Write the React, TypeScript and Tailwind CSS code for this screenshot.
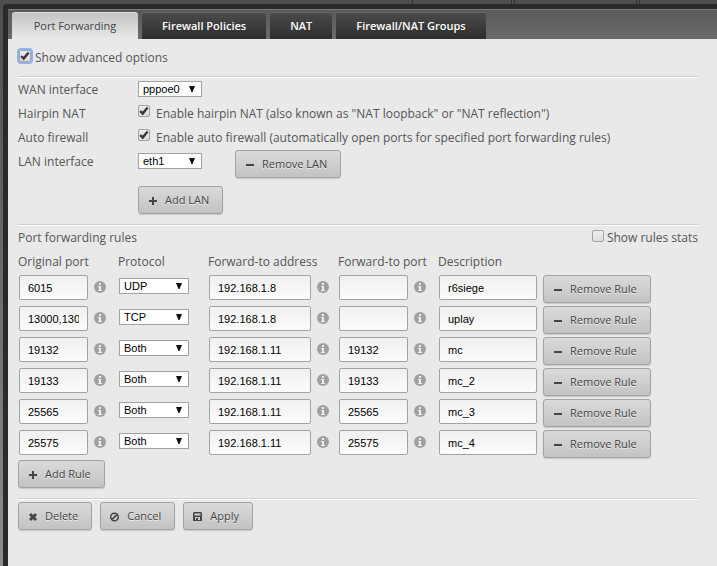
import { ButtonHTMLAttributes, FC, InputHTMLAttributes, ReactNode, useState } from 'react';
import clsx from 'clsx';

const tabs = ['Port Forwarding', 'Firewall Policies', 'NAT', 'Firewall/NAT Groups'];

const rules = [
  { port: '6015', protocol: 'UDP', address: '192.168.1.8', forwardPort: '', description: 'r6siege' },
  { port: '13000,13005', protocol: 'TCP', address: '192.168.1.8', forwardPort: '', description: 'uplay' },
  { port: '19132', protocol: 'Both', address: '192.168.1.11', forwardPort: '19132', description: 'mc' },
  { port: '19133', protocol: 'Both', address: '192.168.1.11', forwardPort: '19133', description: 'mc_2' },
  { port: '25565', protocol: 'Both', address: '192.168.1.11', forwardPort: '25565', description: 'mc_3' },
  { port: '25575', protocol: 'Both', address: '192.168.1.11', forwardPort: '25575', description: 'mc_4' },
];

const iconPaths = {
  minus: <path d="M2 4h8v2H2z" />,
  plus: <path d="M5 1h2v3h3v2H7v3H5V6H2V4h3z" />,
  cross: <path d="M2 3l2-2 2 2 2-2 2 2-2 2 2 2-2 2-2-2-2 2-2-2 2-2z" />,
  ban: <path d="M5.5 1.2a3.8 3.8 0 1 0 0 7.6 3.8 3.8 0 0 0 0-7.6zM2.9 7.6l5.2-5.2" fill="none" stroke="currentColor" strokeWidth="1.5" />,
  save: <path fillRule="evenodd" d="M2 0h7l1 1v8H1V1zM2.5 1.5v2h6v-2zM3 5v3h1V6h2v2h2V5z" />,
};

interface ActionButtonProps extends ButtonHTMLAttributes<HTMLButtonElement> {
  icon: keyof typeof iconPaths;
  children: ReactNode;
}

const ActionButton: FC<ActionButtonProps> = ({ icon, children, ...rest }) => {
  return (
    <button
      type="button"
      className="flex h-7 items-center gap-2 rounded-[3px] border border-[#a3a3a3] bg-linear-to-b from-[#dadada] to-[#c3c3c3] pr-[13px] pl-2 text-[11px] font-medium whitespace-nowrap text-[#444] shadow-[0_1px_1px_rgba(0,0,0,0.15)] text-shadow-[0_1px_0_#eee]"
      {...rest}
    >
      <svg viewBox="0 0 10 10" className="mt-px size-[10px] shrink-0" fill="currentColor" aria-hidden="true">
        {iconPaths[icon]}
      </svg>
      {children}
    </button>
  );
};

interface SelectProps {
  id?: string;
  label?: string;
  value: string;
  options: string[];
  className: string;
}

const Select: FC<SelectProps> = ({ id, label, value, options, className }) => {
  return (
    <div className={clsx('relative h-4', className)}>
      <select
        id={id}
        aria-label={label}
        defaultValue={value}
        className="block h-4 w-full appearance-none border border-[#a3a3a3] bg-white pl-1 font-['Liberation_Sans',Arial,sans-serif] text-[11px] leading-[14px] text-black"
      >
        {options.map((option) => (
          <option key={option}>{option}</option>
        ))}
      </select>
      <svg viewBox="0 0 6 6" className="pointer-events-none absolute top-[5px] right-[7px] size-[6px]" aria-hidden="true">
        <path d="M0 0h6L3.5 6h-1z" fill="#111" />
      </svg>
    </div>
  );
};

const Checkbox: FC<InputHTMLAttributes<HTMLInputElement>> = ({ className, ...rest }) => {
  return (
    <span className="relative block size-3 shrink-0">
      <input
        type="checkbox"
        className={clsx(
          'peer block size-3 appearance-none rounded-[2px] border border-[#a3a3a3] bg-linear-to-b from-[#eee] to-[#dcdcdc]',
          className,
        )}
        {...rest}
      />
      <svg viewBox="0 0 12 12" className="pointer-events-none absolute inset-0 hidden size-3 peer-checked:block" aria-hidden="true">
        <path d="M2.2 6l2.5 2.6L9.6 2.4" fill="none" stroke="#3a3a3a" strokeWidth="2.4" />
      </svg>
    </span>
  );
};

const TextInput: FC<InputHTMLAttributes<HTMLInputElement>> = ({ className, ...rest }) => {
  return (
    <input
      type="text"
      className={clsx(
        "block h-[25px] rounded-[2px] border border-[#a3a3a3] bg-linear-to-b from-[#f0f0f0] to-[#fcfcfc] px-2 pt-px font-['Liberation_Sans',Arial,sans-serif] text-[11px] text-black",
        className,
      )}
      {...rest}
    />
  );
};

const InfoIcon = () => {
  return (
    <svg viewBox="0 0 12 12" className="mt-1.5 size-3 shrink-0" aria-hidden="true">
      <circle cx="6" cy="6" r="6" fill="#a0a0a0" />
      <path d="M5 2h2v2H5zM4 5h3v4h1v1H4V9h1V6H4z" fill="#eee" />
    </svg>
  );
};

const Divider = () => <hr className="h-[2px] border-t border-b border-t-[#cfcfcf] border-b-white" />;

const App = () => {
  const [active, setActive] = useState(tabs[0]);

  return (
    <div className="flex min-h-screen flex-col bg-[#4e4e4e] font-['Open_Sans',sans-serif] text-xs text-[#555]">
      <div className="flex h-1 justify-end">
        <div className="w-[99px] border-r border-[#333]" />
        <div className="w-[99px] border-r border-[#333]" />
        <div className="w-[3px] border-r border-[#333]" />
        <div className="w-[122px] border-r border-[#333]" />
        <div className="w-[3px] border-r border-[#333]" />
        <div className="w-[77px]" />
      </div>
      <div className="flex grow bg-linear-to-b from-[#4e4e4e] to-[#8c8c8c] pl-[3px]">
        <div className="flex grow flex-col rounded-tl-[3px] bg-[#2a2a2a] pt-[5px] pl-[5px]">
          <div role="tablist" className="flex h-[30px] items-end gap-1 border-t border-[#7a7a7a] bg-linear-to-b from-[#5a5a5a] to-[#6b6b6b] pl-1">
            {tabs.map((tab) => (
              <button
                key={tab}
                type="button"
                role="tab"
                aria-selected={tab === active}
                onClick={() => setActive(tab)}
                className={clsx(
                  'h-[27px] rounded-t-[3px] border-t text-[11px] whitespace-nowrap',
                  tab === active
                    ? 'min-w-[126px] border-[#ddd] bg-linear-to-b from-[#c4c4c4] to-[#e9e9e9] px-5 font-medium text-[#444]'
                    : 'border-[#666] bg-linear-to-b from-[#4b4b4b] to-[#2d2d2d] px-5 font-semibold text-white',
                )}
              >
                {tab}
              </button>
            ))}
          </div>

          <main className="grow bg-[#e9e9e9] pr-[19px] pb-9 pl-[10px]">
            <label className="flex h-[37px] items-center gap-1 pl-px">
              <span className="pb-1">
                <Checkbox defaultChecked className="outline-2 outline-[#8fb2ee]" />
              </span>
              Show advanced options
            </label>
            <Divider />

            <div className="grid grid-cols-[120px_1fr] pb-[10px] leading-6">
              <label htmlFor="wan">WAN interface</label>
              <div className="pt-[3px]">
                <Select id="wan" value="pppoe0" options={['pppoe0', 'eth0', 'eth1']} className="w-16" />
              </div>
              <label htmlFor="hairpin">Hairpin NAT</label>
              <label className="flex gap-1.5">
                <span className="pt-[3px]">
                  <Checkbox id="hairpin" defaultChecked />
                </span>
                Enable hairpin NAT (also known as "NAT loopback" or "NAT reflection")
              </label>
              <label htmlFor="auto">Auto firewall</label>
              <label className="flex gap-1.5">
                <span className="pt-[3px]">
                  <Checkbox id="auto" defaultChecked />
                </span>
                Enable auto firewall (automatically open ports for specified port forwarding rules)
              </label>
              <label htmlFor="lan">LAN interface</label>
              <div className="flex gap-[33px]">
                <div className="pt-[3px]">
                  <Select id="lan" value="eth1" options={['eth0', 'eth1', 'eth2']} className="w-16" />
                </div>
                <ActionButton icon="minus">Remove LAN</ActionButton>
              </div>
              <div className="col-start-2 flex pt-2">
                <ActionButton icon="plus">Add LAN</ActionButton>
              </div>
            </div>
            <Divider />

            <div className="flex h-[23px] items-center justify-between">
              <h2>Port forwarding rules</h2>
              <label className="flex items-center gap-[3px]">
                <span className="pb-1">
                  <Checkbox />
                </span>
                Show rules stats
              </label>
            </div>

            <table className="table-fixed border-collapse text-left">
              <thead>
                <tr className="h-[23px] align-middle whitespace-nowrap">
                  <th className="w-[100px] pt-0.5 font-normal">Original port</th>
                  <th className="w-[90px] pt-0.5 font-normal">Protocol</th>
                  <th className="w-[130px] pt-0.5 font-normal">Forward-to address</th>
                  <th className="w-[100px] pt-0.5 font-normal">Forward-to port</th>
                  <th className="w-[105px] pt-0.5 font-normal">Description</th>
                  <td />
                </tr>
              </thead>
              <tbody>
                {rules.map((rule) => (
                  <tr key={rule.description} className="align-top">
                    <td className="pt-[3px] pl-px">
                      <div className="flex gap-1.5">
                        <TextInput aria-label="Original port" defaultValue={rule.port} className="w-[69px]" />
                        <InfoIcon />
                      </div>
                    </td>
                    <td className="pt-1.5 pl-px">
                      <Select label="Protocol" value={rule.protocol} options={['TCP', 'UDP', 'Both']} className="w-[70px]" />
                    </td>
                    <td className="pt-[3px] pl-px">
                      <div className="flex gap-1.5">
                        <TextInput aria-label="Forward-to address" defaultValue={rule.address} className="w-[102px]" />
                        <InfoIcon />
                      </div>
                    </td>
                    <td className="pt-[3px] pl-px">
                      <div className="flex gap-1.5">
                        <TextInput aria-label="Forward-to port" defaultValue={rule.forwardPort} className="w-[69px]" />
                        <InfoIcon />
                      </div>
                    </td>
                    <td className="pt-[3px] pl-px">
                      <TextInput aria-label="Description" defaultValue={rule.description} className="w-[98px]" />
                    </td>
                    <td className="pt-[3px]">
                      <ActionButton icon="minus">Remove Rule</ActionButton>
                    </td>
                  </tr>
                ))}
              </tbody>
            </table>

            <div className="flex pt-0.5 pb-[10px]">
              <ActionButton icon="plus">Add Rule</ActionButton>
            </div>
            <Divider />
            <div className="flex gap-2 pt-0.5">
              <ActionButton icon="cross">Delete</ActionButton>
              <ActionButton icon="ban">Cancel</ActionButton>
              <ActionButton icon="save">Apply</ActionButton>
            </div>
          </main>
        </div>
      </div>
    </div>
  );
};

export default App;
